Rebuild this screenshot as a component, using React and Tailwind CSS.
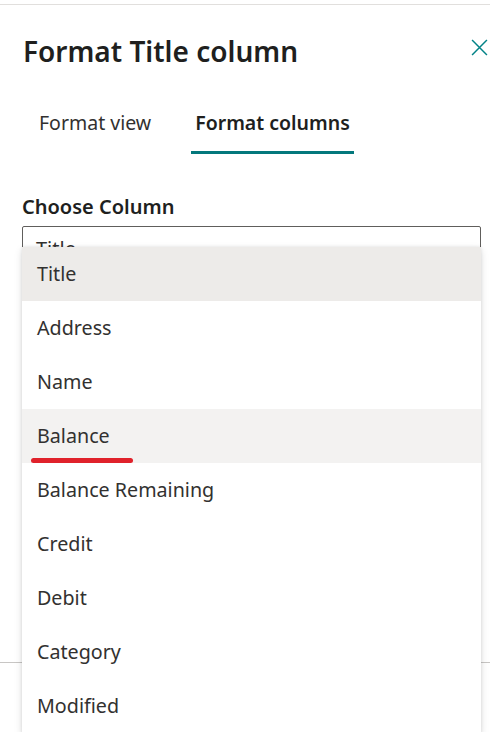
import React from 'react'

const columns = ['Title', 'Address', 'Name', 'Balance', 'Balance Remaining', 'Credit', 'Debit', 'Category', 'Modified']

export default function App() {
  return (
    <div
      className="relative w-[490px] h-[732px] overflow-hidden bg-white text-[#323130] flex flex-col"
      style={{ fontFamily: '"Noto Sans", "Open Sans", sans-serif' }}
    >
      <div className="mt-[4px] border-t border-[#e1dfdd]" />

      {/* header */}
      <div className="flex items-start justify-between pl-[23px] pt-[28px]">
        <h1 className="text-[28px] leading-[36px] font-semibold text-[#201f1e]">Format Title column</h1>
        <button className="mt-[6px] mr-[2px] text-[#038387]">
          <svg width="17" height="17" viewBox="0 0 16 16" fill="none" stroke="currentColor" strokeWidth="1.4">
            <path d="M1 1 L15 15 M15 1 L1 15" />
          </svg>
        </button>
      </div>

      {/* tabs */}
      <div className="flex gap-[12px] mt-[41px] pl-[23px]">
        <Tab label="Format view" />
        <Tab label="Format columns" active />
      </div>

      {/* body */}
      <div className="pl-[22px] pt-[40px]">
        <label className="block text-[20px] leading-[26px] font-semibold text-[#201f1e]">Choose Column</label>
        <div className="mt-[6px] w-[459px] h-[46px] border border-[#605e5c] rounded-[2px] px-[13px] flex items-center text-[20px]">
          Title
        </div>
      </div>

      <div className="flex-1" />

      {/* footer */}
      <div className="h-[70px] border-t border-[#c8c6c4]" />

      {/* dropdown menu over the page */}
      <div className="absolute left-[22px] top-[247px] w-[459px] bg-white shadow-[0_3px_8px_rgba(0,0,0,0.13),0_0_3px_rgba(0,0,0,0.1)]">
        {columns.map((c) => (
          <Option key={c} label={c} />
        ))}
      </div>
    </div>
  )
}

function Tab({ label, active }) {
  return (
    <button className="px-[12px]">
      <span
        className={`block px-[4px] pb-[15px] text-[19.5px] leading-[26px] border-b-[3px] ${
          active ? 'font-semibold text-[#201f1e] border-[#03787c]' : 'text-[#323130] border-transparent'
        }`}
      >
        {label}
      </span>
    </button>
  )
}

function Option({ label }) {
  const bg = label === 'Title' ? 'bg-[#edebe9]' : label === 'Balance' ? 'bg-[#f3f2f1]' : 'bg-white'
  return (
    <div className={`relative h-[54px] flex items-center px-[15px] text-[19.7px] ${bg}`}>
      {label}
      {label === 'Balance' && (
        <div className="absolute left-[9px] bottom-0 w-[102px] h-[5px] rounded-full bg-[#e0222b]" />
      )}
    </div>
  )
}
